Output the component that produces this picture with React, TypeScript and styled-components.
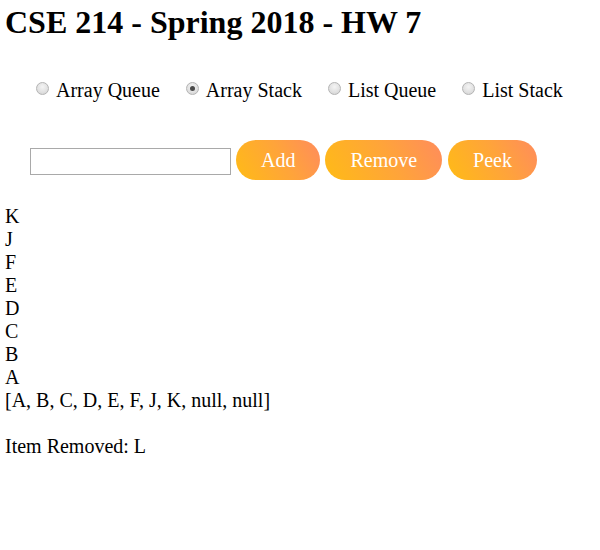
import React, {useState} from 'react';
import styled, {createGlobalStyle} from 'styled-components';

// ── Global ─────────────────────────────────────────────────────────

const GlobalStyle = createGlobalStyle`
  html, body {
    margin: 0;
    padding: 0;
    background: #ffffff;
  }
  body {
    font-family: 'Liberation Serif', 'Times New Roman', serif;
    color: #000000;
  }
`;

// ── Styled components ──────────────────────────────────────────────

const Page = styled.div`
  display: flex;
  flex-direction: column;
  padding: 4px 5px 0 5px;
  font-size: 20px;
`;

const Title = styled.h1`
  margin: 0;
  font-size: 32px;
  font-weight: bold;
  line-height: 37px;
`;

const RadioRow = styled.div`
  display: flex;
  align-items: center;
  gap: 26px;
  margin-top: 38px;
  padding-left: 31px;
  line-height: 23px;
`;

const RadioLabel = styled.label`
  display: inline-flex;
  align-items: center;
  gap: 7px;
  cursor: pointer;
`;

const RadioInput = styled.input.attrs({type: 'radio'})`
  appearance: none;
  -webkit-appearance: none;
  margin: 0;
  width: 13px;
  height: 13px;
  border-radius: 50%;
  border: 1px solid #b4b4b4;
  background: radial-gradient(circle at 50% 35%, #f4f4f4 0%, #e2e2e2 55%, #d0d0d0 100%);
  position: relative;
  top: -2px;
  box-sizing: border-box;

  &:checked::after {
    content: '';
    position: absolute;
    left: 3px;
    top: 3px;
    width: 5px;
    height: 5px;
    border-radius: 50%;
    background: #4a4a4a;
  }
`;

const ControlRow = styled.div`
  display: flex;
  align-items: center;
  margin-top: 38px;
  padding-left: 25px;
`;

const TextInput = styled.input`
  box-sizing: border-box;
  width: 201px;
  height: 27px;
  margin: 2px 5px 0 0;
  border: 1px solid #a9a9a9;
  font-size: 16px;
  font-family: inherit;
  padding: 2px 4px;
  outline: none;
`;

const ActionButton = styled.button<{$gap?: number}>`
  height: 40px;
  padding: 0 25px;
  margin-left: ${p => p.$gap ?? 0}px;
  border: none;
  border-radius: 20px;
  background: linear-gradient(60deg, #ffbb16 0%, #ffa43a 55%, #ff8c5c 100%);
  color: #ffffff;
  font-family: 'Liberation Serif', 'Times New Roman', serif;
  font-size: 20px;
  cursor: pointer;
`;

const Output = styled.div`
  display: flex;
  flex-direction: column;
  margin-top: 25px;
  line-height: 23px;
`;

const Line = styled.div`
  min-height: 23px;
`;

// ── Component ──────────────────────────────────────────────────────

const modes = ['Array Queue', 'Array Stack', 'List Queue', 'List Stack'];
const stack = ['K', 'J', 'F', 'E', 'D', 'C', 'B', 'A'];

export default function App() {
  const [mode, setMode] = useState('Array Stack');

  return (
    <>
      <GlobalStyle />
      <Page>
        <Title>CSE 214 - Spring 2018 - HW 7</Title>

        <RadioRow>
          {modes.map(m => (
            <RadioLabel key={m}>
              <RadioInput
                name="mode"
                checked={mode === m}
                onChange={() => setMode(m)}
              />
              {m}
            </RadioLabel>
          ))}
        </RadioRow>

        <ControlRow>
          <TextInput type="text" />
          <ActionButton>Add</ActionButton>
          <ActionButton $gap={5}>Remove</ActionButton>
          <ActionButton $gap={6}>Peek</ActionButton>
        </ControlRow>

        <Output>
          {stack.map(s => (
            <Line key={s}>{s}</Line>
          ))}
          <Line>[A, B, C, D, E, F, J, K, null, null]</Line>
          <Line />
          <Line>Item Removed: L</Line>
        </Output>
      </Page>
    </>
  );
}
